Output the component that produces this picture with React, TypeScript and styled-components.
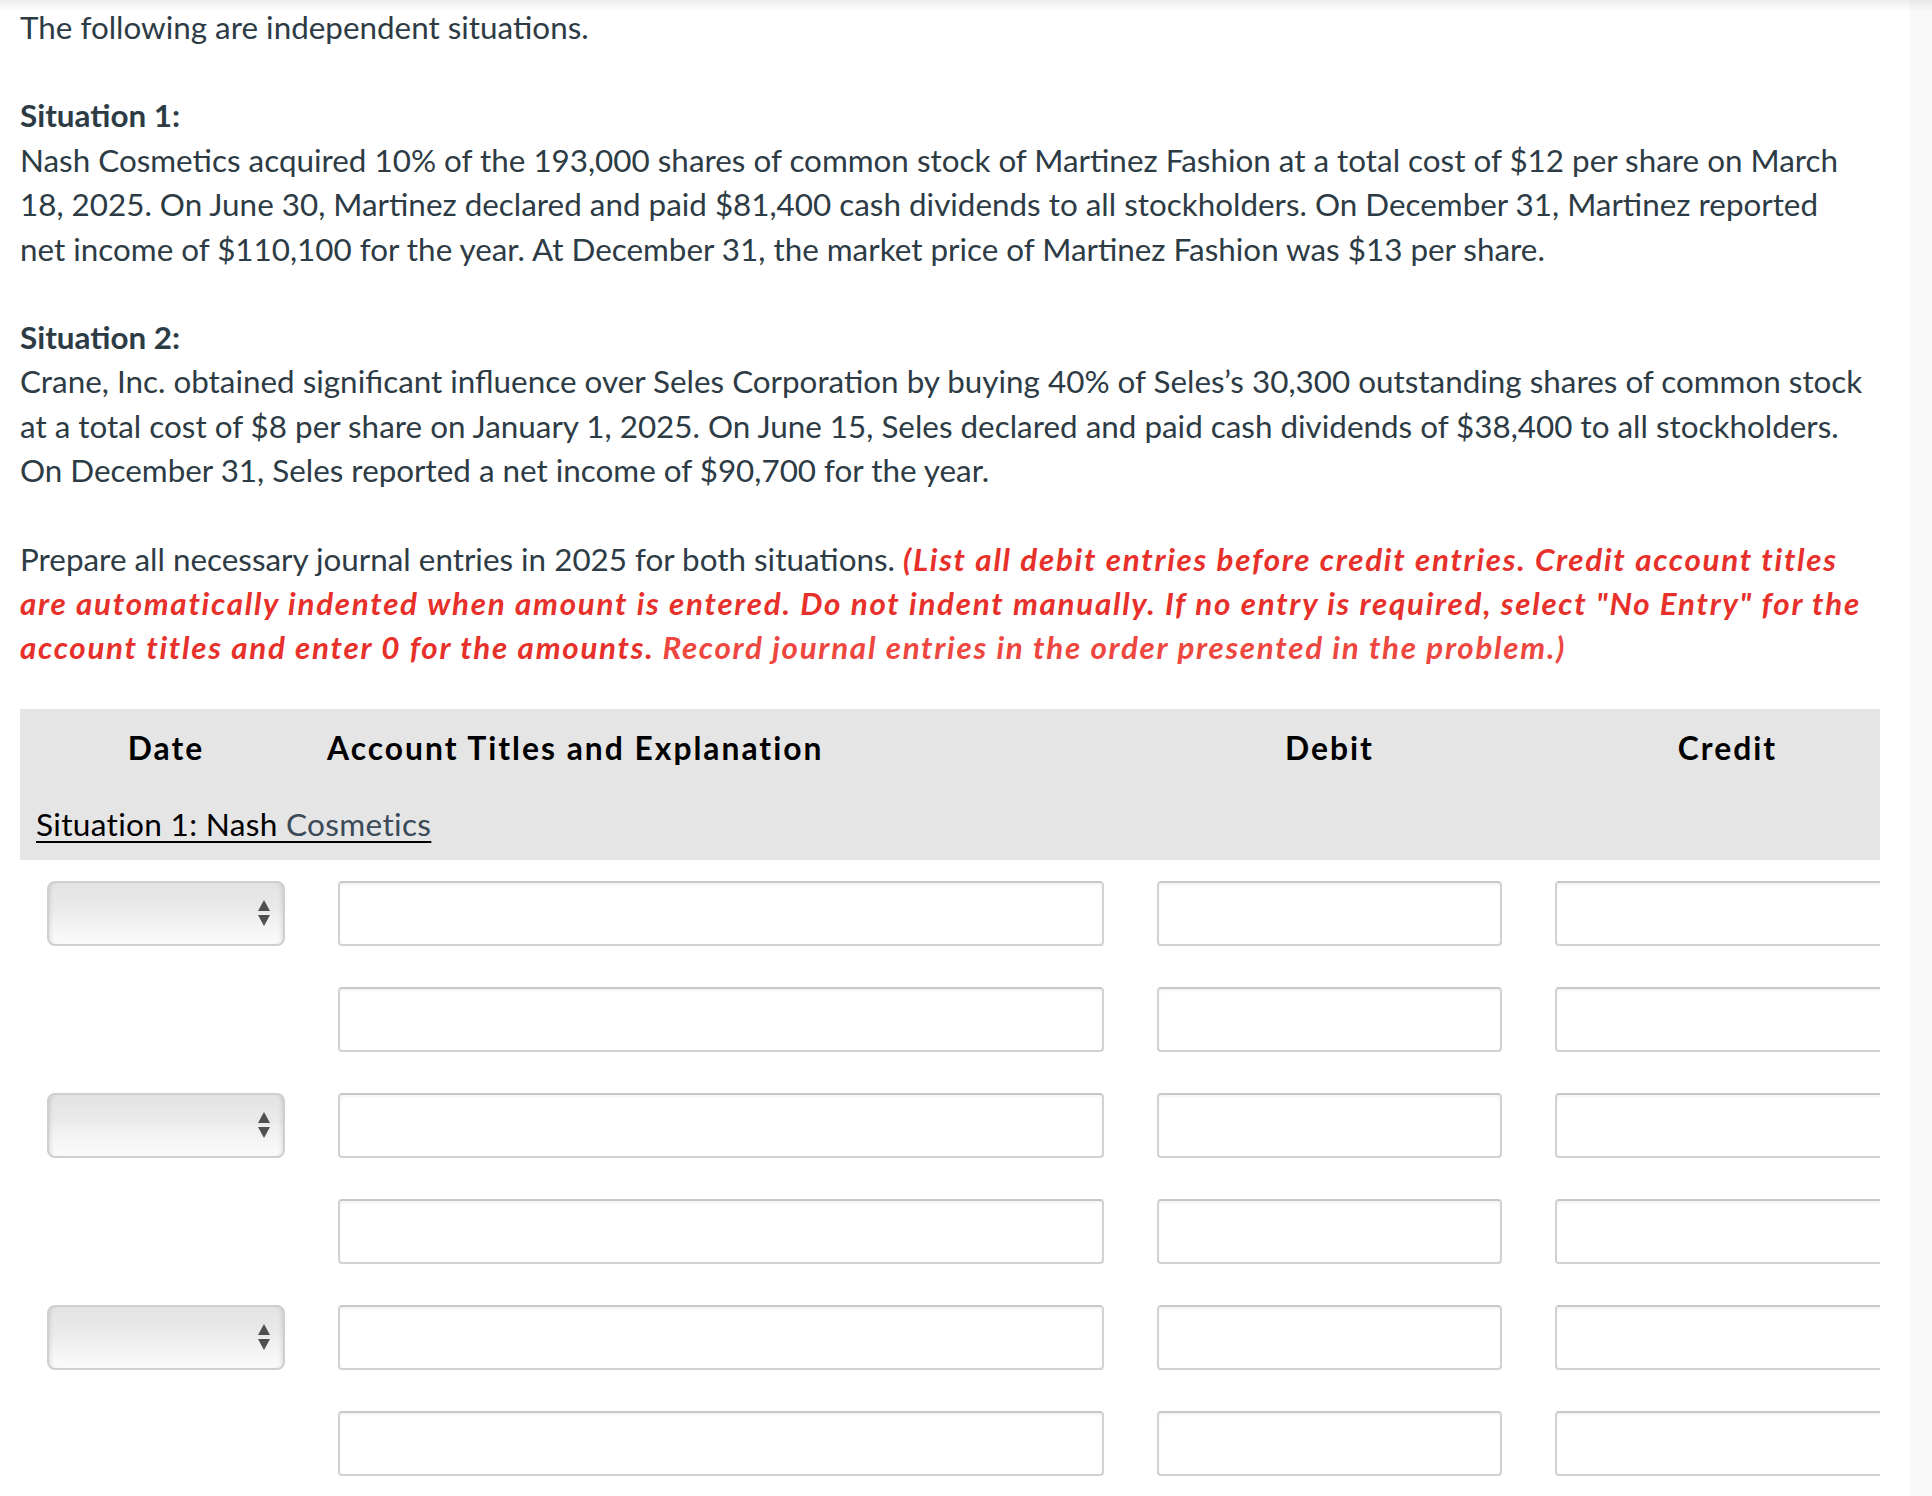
import React from 'react';
import styled, {createGlobalStyle} from 'styled-components';

const GlobalStyle = createGlobalStyle`
  html, body {
    margin: 0;
    padding: 0;
    background: #fff;
  }
  body {
    font-family: Lato, "Open Sans", sans-serif;
  }
`;

const Page = styled.div`
  position: relative;
  display: flex;
  min-height: 1496px;
  &::before {
    content: '';
    position: absolute;
    left: 0;
    right: 0;
    top: 0;
    height: 12px;
    background: linear-gradient(rgba(0, 0, 0, .07), rgba(0, 0, 0, 0));
    pointer-events: none;
  }
`;

const Main = styled.div`
  width: 1860px;
  padding: 5px 30px 0 20px;
`;

const Gutter = styled.div`
  flex: 1;
  background: #f9f9f9;
`;

const Text = styled.p`
  max-width: 1845px;
  margin: 0 0 44px;
  font-size: 31.4px;
  line-height: 44.4px;
  color: #2d3b45;
`;

const Heading = styled.span`
  display: block;
  font-weight: 700;
`;

const Hint = styled.span<{light?: boolean}>`
  color: ${p => p.light ? '#ee4740' : '#e8302a'};
  font-weight: 700;
  font-style: italic;
  letter-spacing: 1.7px;
`;

const Table = styled.div`
  width: 1860px;
  overflow: hidden;
  margin-top: -5px;
`;

const HeadBox = styled.div`
  background: #e5e5e5;
  padding: 22px 0 19px;
`;

const Grid = styled.div`
  display: grid;
  grid-template-columns: 238px 766px 345px 345px;
  column-gap: 53px;
  padding-left: 27px;
`;

const HeadCell = styled.div<{left?: boolean}>`
  font-size: 31.8px;
  line-height: 34px;
  font-weight: 700;
  letter-spacing: 2px;
  color: #000;
  white-space: nowrap;
  text-align: ${p => p.left ? 'left' : 'center'};
  margin-left: ${p => p.left ? '-11px' : '0'};
`;

const SubHeading = styled.div`
  margin: 42px 0 0 16px;
  font-size: 31.6px;
  line-height: 34px;
  letter-spacing: 0.3px;
  color: #000;
  text-decoration: underline;
  text-decoration-thickness: 2px;
  text-underline-offset: 5px;
`;

const Muted = styled.span`
  color: #3a4a57;
`;

const Rows = styled.div`
  display: flex;
  flex-direction: column;
  gap: 41px;
  padding-top: 21px;
`;

const Row = styled(Grid)`
  height: 65px;
`;

const SelectBox = styled.div`
  box-sizing: border-box;
  display: flex;
  align-items: center;
  justify-content: flex-end;
  padding-right: 12px;
  border: 2px solid #cfcfcf;
  border-radius: 8px;
  background: linear-gradient(#e3e3e3 0%, #ebebeb 48%, #eeeeee 50%, #fbfbfb 100%);
  box-shadow: inset 4px 0 4px -3px rgba(0, 0, 0, .12), inset -4px 0 4px -3px rgba(0, 0, 0, .12);
`;

const Field = styled.input`
  box-sizing: border-box;
  width: 100%;
  height: 65px;
  margin: 0;
  border: 2px solid #d2d2d2;
  border-top-color: #c8c8c8;
  border-radius: 4px;
  background: #fff;
  box-shadow: inset 0 2px 3px rgba(0, 0, 0, .05);
  outline: none;
`;

const Arrows = () => (
  <svg width="14" height="28" viewBox="0 0 14 28">
    <polygon points="7,1 13,12 1,12" fill="#505050"/>
    <polygon points="1,16 13,16 7,27" fill="#505050"/>
  </svg>
);

const rows = [true, false, true, false, true, false];

export default function App() {
  return (
    <Page>
      <GlobalStyle/>
      <Main>
        <Text>The following are independent situations.</Text>
        <Text>
          <Heading>Situation 1:</Heading>
          Nash Cosmetics acquired 10% of the 193,000 shares of common stock of Martinez Fashion at a total cost of $12 per share on March 18, 2025. On June 30, Martinez declared and paid $81,400 cash dividends to all stockholders. On December 31, Martinez reported net income of $110,100 for the year. At December 31, the market price of Martinez Fashion was $13 per share.
        </Text>
        <Text>
          <Heading>Situation 2:</Heading>
          Crane, Inc. obtained significant influence over Seles Corporation by buying 40% of Seles’s 30,300 outstanding shares of common stock at a total cost of $8 per share on January 1, 2025. On June 15, Seles declared and paid cash dividends of $38,400 to all stockholders. On December 31, Seles reported a net income of $90,700 for the year.
        </Text>
        <Text>
          Prepare all necessary journal entries in 2025 for both situations. <Hint>(List all debit entries before credit entries. Credit account titles are automatically indented when amount is entered. Do not indent manually. If no entry is required, select "No Entry" for the account titles and enter 0 for the amounts.</Hint> <Hint light>Record journal entries in the order presented in the problem.)</Hint>
        </Text>
        <Table>
          <HeadBox>
            <Grid>
              <HeadCell>Date</HeadCell>
              <HeadCell left>Account Titles and Explanation</HeadCell>
              <HeadCell>Debit</HeadCell>
              <HeadCell>Credit</HeadCell>
            </Grid>
            <SubHeading>Situation 1: Nash <Muted>Cosmetics</Muted></SubHeading>
          </HeadBox>
          <Rows>
            {rows.map((hasDate, i) => (
              <Row key={i}>
                {hasDate ? <SelectBox><Arrows/></SelectBox> : <div/>}
                <Field/>
                <Field/>
                <Field/>
              </Row>
            ))}
          </Rows>
        </Table>
      </Main>
      <Gutter/>
    </Page>
  );
}
